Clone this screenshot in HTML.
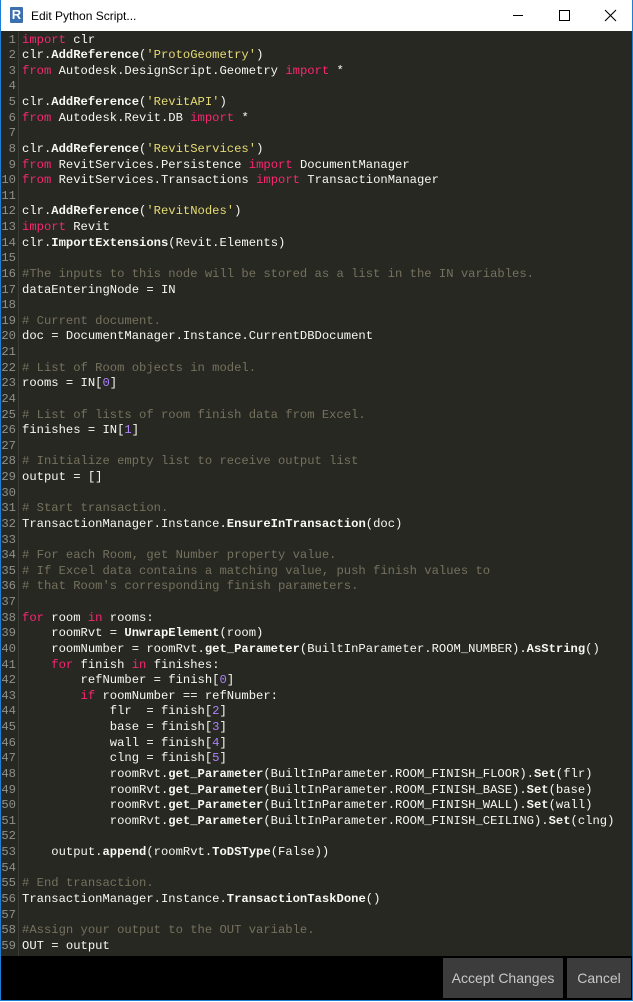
<!DOCTYPE html>
<html><head><meta charset="utf-8"><style>
html,body{margin:0;padding:0;width:633px;height:1002px;overflow:hidden;background:#fff}
.win{position:absolute;left:0;top:0;width:631px;height:1000px;border:1px solid #1a7fd6;border-top:none;background:#fff}
.title{position:absolute;left:0;top:0;width:631px;height:31px;background:#fff;font:12px "Liberation Sans",sans-serif;color:#000}
.title .t{position:absolute;left:30px;top:9px}
.logo{position:absolute;left:9px;top:7px;width:13px;height:16px;background:#3a6fb0;color:#fff;font:bold 13px "Liberation Sans",sans-serif;text-align:center;line-height:16px;border-radius:1px}
.ctl{position:absolute;top:0;height:31px;width:46px}
.code{position:absolute;left:0;top:31px;width:631px;height:925px;background:#272822;overflow:hidden}
.ln{position:absolute;left:0;top:1.5px;width:15px;text-align:right;color:#8f908a}
.tx{position:absolute;left:21px;top:1.5px;color:#f8f8f2}
.ln div,.tx div{height:15.63px;line-height:15.63px;font:12.2px "Liberation Mono",monospace;white-space:pre}
.k{color:#f92672}.s{color:#e6db74}.n{color:#ae81ff}.c{color:#75715e}b{font-weight:bold}
.sep{position:absolute;left:17px;top:0;width:1px;height:925px;background:#3b3c36}
.bot{position:absolute;left:0;top:956px;width:631px;height:44px;background:#000}
.btn{position:absolute;top:2px;height:40px;background:#3c3c3c;color:#c8c8c8;font:14px "Liberation Sans",sans-serif;text-align:center;line-height:40px}
</style></head><body><div class="win">
<div class="title"><div class="logo">R</div><div class="t">Edit Python Script...</div>
<svg class="ctl" style="left:494px" viewBox="0 0 46 31"><line x1="18" y1="15.5" x2="28" y2="15.5" stroke="#000" stroke-width="1"/></svg>
<svg class="ctl" style="left:540px" viewBox="0 0 46 31"><rect x="18.5" y="10.5" width="10" height="10" fill="none" stroke="#000"/></svg>
<svg class="ctl" style="left:586px" viewBox="0 0 46 31"><path d="M18 10 L29 21 M29 10 L18 21" stroke="#000" stroke-width="1.1"/></svg>
</div>
<div class="code"><div class="sep"></div>
<div class="ln"><div>1</div><div>2</div><div>3</div><div>4</div><div>5</div><div>6</div><div>7</div><div>8</div><div>9</div><div>10</div><div>11</div><div>12</div><div>13</div><div>14</div><div>15</div><div>16</div><div>17</div><div>18</div><div>19</div><div>20</div><div>21</div><div>22</div><div>23</div><div>24</div><div>25</div><div>26</div><div>27</div><div>28</div><div>29</div><div>30</div><div>31</div><div>32</div><div>33</div><div>34</div><div>35</div><div>36</div><div>37</div><div>38</div><div>39</div><div>40</div><div>41</div><div>42</div><div>43</div><div>44</div><div>45</div><div>46</div><div>47</div><div>48</div><div>49</div><div>50</div><div>51</div><div>52</div><div>53</div><div>54</div><div>55</div><div>56</div><div>57</div><div>58</div><div>59</div></div>
<div class="tx"><div><span class="k">import</span> clr</div><div>clr.<b>AddReference</b>(<span class="s">'ProtoGeometry'</span>)</div><div><span class="k">from</span> Autodesk.DesignScript.Geometry <span class="k">import</span> *</div><div></div><div>clr.<b>AddReference</b>(<span class="s">'RevitAPI'</span>)</div><div><span class="k">from</span> Autodesk.Revit.DB <span class="k">import</span> *</div><div></div><div>clr.<b>AddReference</b>(<span class="s">'RevitServices'</span>)</div><div><span class="k">from</span> RevitServices.Persistence <span class="k">import</span> DocumentManager</div><div><span class="k">from</span> RevitServices.Transactions <span class="k">import</span> TransactionManager</div><div></div><div>clr.<b>AddReference</b>(<span class="s">'RevitNodes'</span>)</div><div><span class="k">import</span> Revit</div><div>clr.<b>ImportExtensions</b>(Revit.Elements)</div><div></div><div><span class="c">#The inputs to this node will be stored as a list in the IN variables.</span></div><div>dataEnteringNode = IN</div><div></div><div><span class="c"># Current document.</span></div><div>doc = DocumentManager.Instance.CurrentDBDocument</div><div></div><div><span class="c"># List of Room objects in model.</span></div><div>rooms = IN[<span class="n">0</span>]</div><div></div><div><span class="c"># List of lists of room finish data from Excel.</span></div><div>finishes = IN[<span class="n">1</span>]</div><div></div><div><span class="c"># Initialize empty list to receive output list</span></div><div>output = []</div><div></div><div><span class="c"># Start transaction.</span></div><div>TransactionManager.Instance.<b>EnsureInTransaction</b>(doc)</div><div></div><div><span class="c"># For each Room, get Number property value.</span></div><div><span class="c"># If Excel data contains a matching value, push finish values to</span></div><div><span class="c"># that Room's corresponding finish parameters.</span></div><div></div><div><span class="k">for</span> room <span class="k">in</span> rooms:</div><div>    roomRvt = <b>UnwrapElement</b>(room)</div><div>    roomNumber = roomRvt.<b>get_Parameter</b>(BuiltInParameter.ROOM_NUMBER).<b>AsString</b>()</div><div>    <span class="k">for</span> finish <span class="k">in</span> finishes:</div><div>        refNumber = finish[<span class="n">0</span>]</div><div>        <span class="k">if</span> roomNumber == refNumber:</div><div>            flr  = finish[<span class="n">2</span>]</div><div>            base = finish[<span class="n">3</span>]</div><div>            wall = finish[<span class="n">4</span>]</div><div>            clng = finish[<span class="n">5</span>]</div><div>            roomRvt.<b>get_Parameter</b>(BuiltInParameter.ROOM_FINISH_FLOOR).<b>Set</b>(flr)</div><div>            roomRvt.<b>get_Parameter</b>(BuiltInParameter.ROOM_FINISH_BASE).<b>Set</b>(base)</div><div>            roomRvt.<b>get_Parameter</b>(BuiltInParameter.ROOM_FINISH_WALL).<b>Set</b>(wall)</div><div>            roomRvt.<b>get_Parameter</b>(BuiltInParameter.ROOM_FINISH_CEILING).<b>Set</b>(clng)</div><div></div><div>    output.<b>append</b>(roomRvt.<b>ToDSType</b>(False))</div><div></div><div><span class="c"># End transaction.</span></div><div>TransactionManager.Instance.<b>TransactionTaskDone</b>()</div><div></div><div><span class="c">#Assign your output to the OUT variable.</span></div><div>OUT = output</div></div></div>
<div class="bot">
<div class="btn" style="left:442px;width:120px">Accept Changes</div>
<div class="btn" style="left:566px;width:64px">Cancel</div>
</div>
</div></body></html>
